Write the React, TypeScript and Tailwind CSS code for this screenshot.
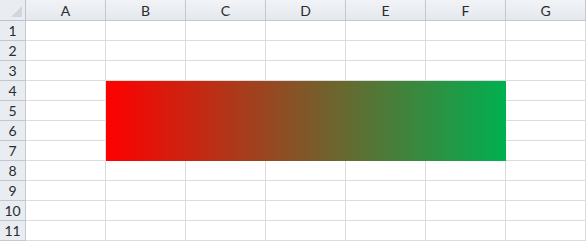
import React from "react";

const cols = ["A", "B", "C", "D", "E", "F", "G"];
const rows = Array.from({ length: 11 }, (_, i) => i + 1);

// cells of B4:F7 are replaced by the gradient block
const inBlock = (r: number, ci: number) => r >= 4 && r <= 7 && ci >= 1 && ci <= 5;

export default function App() {
  return (
    <div className="w-[586px] h-[241px] bg-white overflow-hidden" style={{ fontFamily: "Lato, 'Liberation Sans', sans-serif" }}>
      <div className="grid grid-cols-[26px_repeat(7,80px)] grid-rows-[21px_repeat(11,20px)]">
        {/* corner */}
        <div className="border-r border-b border-[#b9c3cf] bg-[#e9edf2] flex items-end justify-end p-[3px]">
          <svg width="11" height="11" viewBox="0 0 11 11"><path d="M11 0 L11 11 L0 11 Z" fill="#d3d7dc" /></svg>
        </div>
        {cols.map((c) => (
          <div key={c} className="border-r border-b border-[#c1c8d0] bg-gradient-to-b from-[#f1f3f6] to-[#e4e8ed] flex items-center justify-center text-[14px] text-[#2b2b2b]">
            {c}
          </div>
        ))}
        {rows.map((r) => (
          <React.Fragment key={r}>
            <div className="col-start-1 border-r border-b border-[#c1c8d0] bg-[#e9edf2] flex items-center justify-center text-[14px] text-[#2b2b2b]" style={{ gridRowStart: r + 1 }}>
              {r}
            </div>
            {cols.map((c, ci) =>
              inBlock(r, ci) ? null : (
                <div key={c} className="border-r border-b border-[#dadcdd]" style={{ gridRowStart: r + 1, gridColumnStart: ci + 2 }} />
              )
            )}
          </React.Fragment>
        ))}
        {/* gradient block B4:F7 */}
        <div className="col-start-3 col-span-5 row-start-5 row-span-4 bg-[linear-gradient(to_right,#ff0000,#00b050)]" />
      </div>
    </div>
  );
}
